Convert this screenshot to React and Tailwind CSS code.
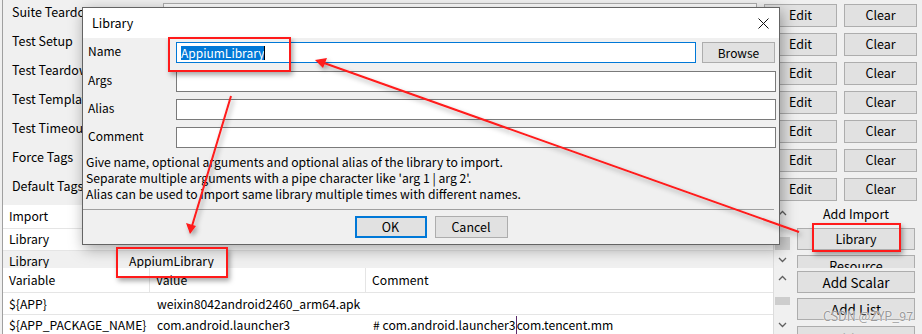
import React from 'react';

// Settings rows shown behind the dialog
const settingRows = [
  'Suite Teardown',
  'Test Setup',
  'Test Teardown',
  'Test Template',
  'Test Timeout',
  'Force Tags',
  'Default Tags',
];

const WinButton = ({ children, className = '' }) => (
  <div className={`flex items-center justify-center border border-[#adadad] bg-[#e1e1e1] text-black ${className}`}>
    {children}
  </div>
);

const ChevronUp = () => (
  <svg width="9" height="6" viewBox="0 0 9 6">
    <polyline points="1,5 4.5,1.5 8,5" fill="none" stroke="#606060" strokeWidth="1.3" />
  </svg>
);

const ChevronDown = () => (
  <svg width="9" height="6" viewBox="0 0 9 6">
    <polyline points="1,1 4.5,4.5 8,1" fill="none" stroke="#606060" strokeWidth="1.3" />
  </svg>
);

const SettingRow = ({ label }) => (
  <div className="flex h-[29px] shrink-0 items-start">
    <div className="w-[160px] pl-[9px] text-[12.5px] leading-[16px] text-black">{label}</div>
    <div className="-mt-px h-[24px] w-[594px] border border-[#adadad] bg-white"></div>
    <WinButton className="ml-[7px] h-[23px] w-[73px] text-[12.5px]">Edit</WinButton>
    <WinButton className="ml-[7px] h-[23px] w-[73px] text-[12.5px]">Clear</WinButton>
  </div>
);

const LibraryDialog = () => (
  <div className="absolute left-[82px] top-[7px] flex h-[238px] w-[698px] flex-col border border-[#646464] bg-[#f0f0f0] shadow-[2px_4px_14px_rgba(0,0,0,0.35)]">
    {/* title bar */}
    <div className="flex h-[30px] shrink-0 items-center justify-between bg-white pl-[9px] pr-[10px]">
      <span className="text-[12.5px] text-black">Library</span>
      <svg width="11" height="11" viewBox="0 0 11 11">
        <line x1="0.5" y1="0.5" x2="10.5" y2="10.5" stroke="#111" strokeWidth="1" />
        <line x1="10.5" y1="0.5" x2="0.5" y2="10.5" stroke="#111" strokeWidth="1" />
      </svg>
    </div>

    {/* form */}
    <div className="flex flex-col pl-[5px] pr-[3px] pt-[4px] text-[12px] text-black">
      <div className="flex h-[21px] items-center">
        <div className="w-[88px] pb-[3px] leading-[14px]">Name</div>
        <div className="flex h-[21px] w-[520px] items-center border border-[#0078d7] bg-white pl-[4px]">
          <span className="bg-[#0078d7] leading-[14px] text-white">AppiumLibrary</span>
          <span className="h-[14px] w-px bg-black"></span>
        </div>
        <WinButton className="ml-[6px] h-[21px] w-[73px]">Browse</WinButton>
      </div>
      <div className="mt-[8px] flex h-[21px] items-center">
        <div className="w-[88px] pb-[3px] leading-[14px]">Args</div>
        <div className="h-[21px] flex-1 border border-[#7a7a7a] bg-white"></div>
      </div>
      <div className="mt-[7px] flex h-[21px] items-center">
        <div className="w-[88px] pb-[3px] leading-[14px]">Alias</div>
        <div className="h-[21px] flex-1 border border-[#7a7a7a] bg-white"></div>
      </div>
      <div className="mt-[7px] flex h-[21px] items-center">
        <div className="w-[88px] pb-[3px] leading-[14px]">Comment</div>
        <div className="h-[21px] flex-1 border border-[#7a7a7a] bg-white"></div>
      </div>
    </div>

    <div className="ml-[3px] mt-[6px] flex flex-col text-[12.2px] leading-[16px] text-black">
      <div>Give name, optional arguments and optional alias of the library to import.</div>
      <div>Separate multiple arguments with a pipe character like 'arg 1 | arg 2'.</div>
      <div>Alias can be used to import same library multiple times with different names.</div>
    </div>

    <div className="mr-[5px] mt-[7px] border-t border-[#a0a0a0]"></div>

    <div className="mt-[6px] flex justify-center gap-[8px] text-[12.5px]">
      <div className="flex h-[22px] w-[72px] items-center justify-center border-2 border-[#0078d7] bg-[#e1e1e1]">OK</div>
      <WinButton className="h-[22px] w-[73px]">Cancel</WinButton>
    </div>
  </div>
);

const Annotations = () => (
  <>
    <div className="absolute left-[168px] top-[37px] h-[35px] w-[123px] border-2 border-[#ff1a1a] shadow-[2px_3px_5px_rgba(0,0,0,0.35)]"></div>
    <div className="absolute left-[116px] top-[247px] h-[31px] w-[112px] border-2 border-[#ff1a1a] shadow-[2px_3px_5px_rgba(0,0,0,0.35)]"></div>
    <div className="absolute left-[812px] top-[223px] h-[29px] w-[89px] border-2 border-[#ff1a1a] shadow-[2px_3px_5px_rgba(0,0,0,0.35)]"></div>

    <svg className="absolute left-0 top-0" width="922" height="334" viewBox="0 0 922 334">
      <defs>
        <filter id="arrowShadow" x="-20%" y="-20%" width="140%" height="140%">
          <feDropShadow dx="2" dy="3" stdDeviation="2.5" floodColor="#000" floodOpacity="0.35" />
        </filter>
      </defs>
      <g filter="url(#arrowShadow)">
        <line x1="231" y1="96" x2="192" y2="226" stroke="#ff1a1a" strokeWidth="2" />
        <polygon points="190,234 186,223 196,226" fill="#ff1a1a" />
        <line x1="799" y1="232" x2="324" y2="63" stroke="#ff1a1a" strokeWidth="2" />
        <polygon points="315,60 327,58 323,68" fill="#ff1a1a" />
      </g>
    </svg>

    <div className="absolute left-[823px] top-[308px] text-[12.5px] leading-[16px] text-[#9a9a9a] [text-shadow:0_0_1px_#fff,0_0_2px_#fff]">
      CSDN @ZYP_97
    </div>
  </>
);

export default function App() {
  return (
    <div className="relative h-[334px] w-[922px] overflow-hidden bg-[#f0f0f0] font-['Noto_Sans_CJK_SC','Noto_Sans',sans-serif]">
      <div className="ml-[2px] flex h-full flex-col border-l border-[#a0a0a0]">
        {/* settings rows */}
        <div className="flex h-[205px] shrink-0 flex-col overflow-hidden pt-[4px]">
          {settingRows.map((label) => (
            <SettingRow key={label} label={label} />
          ))}
        </div>

        {/* import table */}
        <div className="flex h-[63px] shrink-0 overflow-hidden">
          <div className="flex w-[771px] flex-col overflow-hidden border-r border-[#dcdcdc] bg-white text-[12.2px] text-black">
            <div className="flex h-[24px] shrink-0 items-center border-b border-[#e5e5e5] pl-[6px]">Import</div>
            <div className="flex h-[22px] shrink-0 items-center border-b border-[#e5e5e5] pl-[6px]">Library</div>
            <div className="flex h-[17px] shrink-0 items-end bg-[#f0f0f0] leading-[14px]">
              <div className="w-[117px] pl-[6px]">Library</div>
              <div className="pl-[9px]">AppiumLibrary</div>
            </div>
          </div>
          <div className="flex w-[16px] flex-col items-center">
            <div className="mt-[5px]"><ChevronUp /></div>
            <div className="mt-[21px] h-[13px] w-[15px] shrink-0 bg-[#cdcdcd]"></div>
            <div className="mt-[7px]"><ChevronDown /></div>
          </div>
          <div className="flex w-[132px] flex-col items-stretch">
            <div className="mt-px text-center text-[12.5px] leading-[16px]">Add Import</div>
            <WinButton className="ml-[7px] mt-[6px] h-[22px] w-[118px] shrink-0 text-[12.5px]">Library</WinButton>
            <WinButton className="ml-[7px] mt-[5px] h-[22px] w-[118px] shrink-0 text-[12.5px]">Resource</WinButton>
          </div>
        </div>

        {/* variable table */}
        <div className="flex min-h-0 flex-1">
          <div className="flex w-[771px] flex-col overflow-hidden border-r border-[#dcdcdc] bg-white text-[12.2px] text-black">
            <div className="flex h-[25px] shrink-0 items-stretch border-b border-[#e5e5e5]">
              <div className="flex w-[147px] items-center border-r border-[#e5e5e5] pl-[6px]">Variable</div>
              <div className="flex w-[216px] items-center border-r border-[#e5e5e5] pl-[6px]">Value</div>
              <div className="flex items-center pl-[6px]">Comment</div>
            </div>
            <div className="flex h-[22px] shrink-0 items-center border-b border-[#e5e5e5] pt-[2px]">
              <div className="w-[148px] pl-[6px]">{'${APP}'}</div>
              <div className="w-[216px] pl-[6px]">weixin8042android2460_arm64.apk</div>
            </div>
            <div className="flex h-[22px] shrink-0 items-center border-b border-[#e5e5e5]">
              <div className="w-[148px] pl-[6px]">{'${APP_PACKAGE_NAME}'}</div>
              <div className="w-[216px] pl-[6px]">com.android.launcher3</div>
              <div className="pl-[6px]">
                # com.android.launcher3<span className="border-l border-[#5a2a6a]"></span>com.tencent.mm
              </div>
            </div>
          </div>
          <div className="flex w-[16px] flex-col items-center">
            <div className="mt-[7px]"><ChevronUp /></div>
            <div className="mt-[16px] h-[8px] w-[15px] shrink-0 bg-[#cdcdcd]"></div>
            <div className="mt-[17px]"><ChevronDown /></div>
          </div>
          <div className="flex w-[132px] flex-col">
            <WinButton className="ml-[7px] mt-[3px] h-[22px] w-[118px] shrink-0 text-[13.5px]">Add Scalar</WinButton>
            <WinButton className="ml-[7px] mt-[5px] h-[22px] w-[118px] shrink-0 text-[13.5px]">Add List</WinButton>
            <WinButton className="ml-[7px] mt-[6px] h-[22px] w-[118px] shrink-0 items-start pt-[2px] text-[13.5px]">Add Dict</WinButton>
          </div>
        </div>
      </div>

      <LibraryDialog />
      <Annotations />
    </div>
  );
}
